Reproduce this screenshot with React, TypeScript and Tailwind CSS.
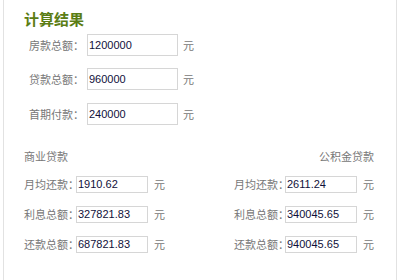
import React from 'react';

const cjk = "font-['SimSun','Noto_Sans_CJK_SC',sans-serif]";
const num = "font-['Liberation_Sans','Noto_Sans_CJK_SC',sans-serif]";

const topRows = [
  { label: '房款总额：', value: '1200000' },
  { label: '贷款总额：', value: '960000' },
  { label: '首期付款：', value: '240000' },
];

const business = [
  { label: '月均还款：', value: '1910.62' },
  { label: '利息总额：', value: '327821.83' },
  { label: '还款总额：', value: '687821.83' },
];

const fund = [
  { label: '月均还款：', value: '2611.24' },
  { label: '利息总额：', value: '340045.65' },
  { label: '还款总额：', value: '940045.65' },
];

const ResultRow: React.FC<{ label: string; value: string; labelW: string }> = ({ label, value, labelW }) => (
  <div className="flex items-center h-[17px]">
    <span className={`${labelW} shrink-0 whitespace-nowrap text-[11px] leading-[17px] text-[#777] ${cjk}`}>{label}</span>
    <div className={`w-[72px] h-[17px] shrink-0 border border-[#d6d6d6] bg-white pl-[1px] text-[11px] leading-[15px] text-[#10103a] ${num}`}>
      {value}
    </div>
    <span className={`ml-[6px] text-[11px] text-[#777] ${cjk}`}>元</span>
  </div>
);

const App: React.FC = () => {
  return (
    <div className="w-[400px] h-[280px] bg-white overflow-hidden">
      <div className="ml-[3px] w-[394px] h-[280px] border-x border-[#e2e2e2]">
        <h2 className={`pl-[20px] pt-[9px] text-[15px] leading-[20px] font-bold text-[#5b7d14] ${cjk}`}>计算结果</h2>

        <div className="pl-[25px]">
          {topRows.map((row, i) => (
            <div key={row.label} className={`flex items-center h-[22px] ${i === 0 ? 'mt-[5px]' : i === 1 ? 'mt-[12px]' : 'mt-[13px]'}`}>
              <span className={`w-[58px] shrink-0 whitespace-nowrap text-[11px] text-[#777] ${cjk}`}>{row.label}</span>
              <div className={`w-[91px] h-[22px] shrink-0 border border-[#d6d6d6] pl-[1px] text-[11px] leading-[20px] text-[#10103a] ${num}`}>
                {row.value}
              </div>
              <span className={`ml-[5px] text-[11px] text-[#777] ${cjk}`}>元</span>
            </div>
          ))}
        </div>

        <div className="flex justify-between pl-[20px] pr-[22px] mt-[23px]">
          <div className="flex flex-col">
            <span className={`text-[11px] leading-[16px] text-[#777] ${cjk}`}>商业贷款</span>
            <div className="flex flex-col gap-[13px] mt-[12px]">
              {business.map((row) => (
                <ResultRow key={row.label} {...row} labelW="w-[52px]" />
              ))}
            </div>
          </div>
          <div className="flex flex-col">
            <span className={`text-right text-[11px] leading-[16px] text-[#777] ${cjk}`}>公积金贷款</span>
            <div className="flex flex-col gap-[13px] mt-[12px]">
              {fund.map((row) => (
                <ResultRow key={row.label} {...row} labelW="w-[51px]" />
              ))}
            </div>
          </div>
        </div>
      </div>
    </div>
  );
};

export default App;
